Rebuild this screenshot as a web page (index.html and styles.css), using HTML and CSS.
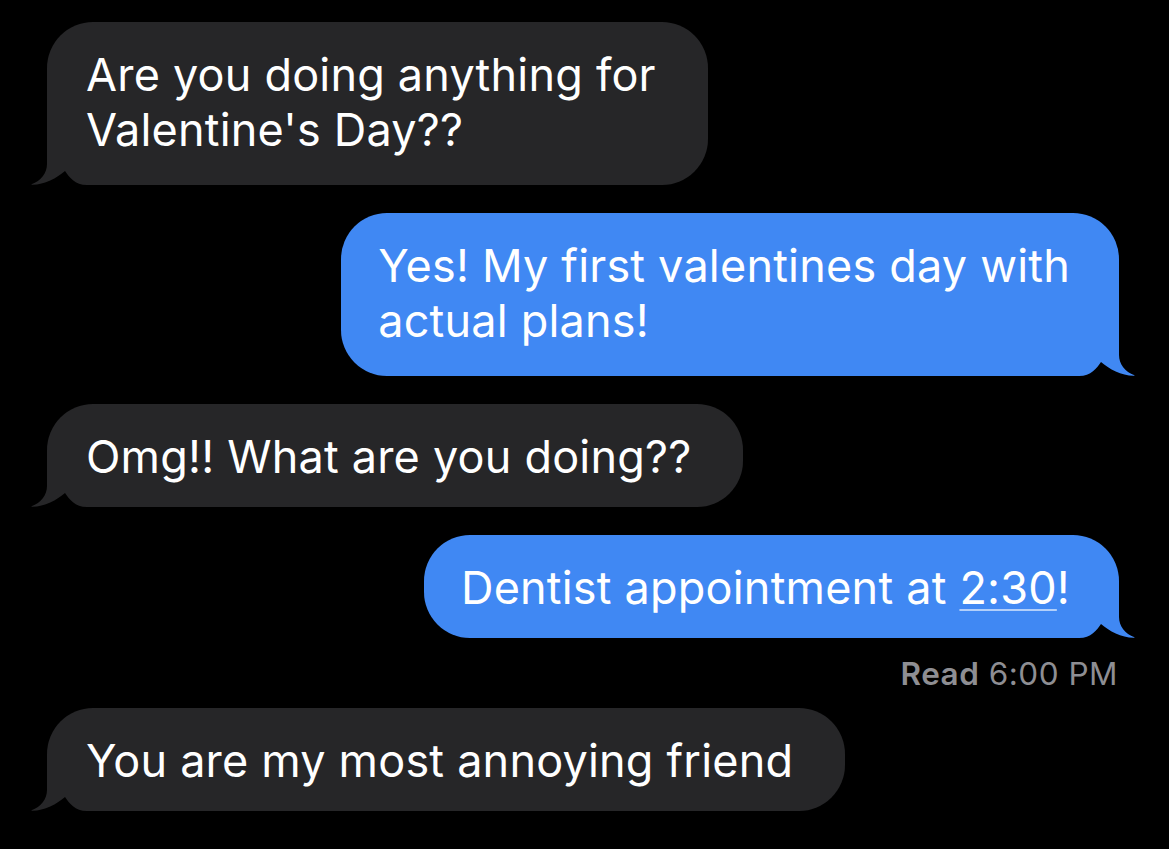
FILE: index.html
```html
<!DOCTYPE html>
<html lang="en">
<head>
<meta charset="utf-8">
<title>Messages</title>
<link rel="stylesheet" href="styles.css">
</head>
<body>
<main class="thread">
  <div class="msg them multi">
    <span class="txt">Are you doing anything for<br>Valentine's Day??</span>
    <svg class="tail" viewBox="0 0 56 30" aria-hidden="true"><rect x="16" y="0" width="40" height="30" fill="#000"/><path d="M16,0 L16,9 C16,18 10,26 0.5,29.2 Q0,29.6 1,29.8 C13,30 26,23 34,16 C38,22 44,30 56,30 L56,0 Z"/></svg>
  </div>
  <div class="msg me multi">
    <span class="txt">Yes! My first valentines day with<br>actual plans!</span>
    <svg class="tail" viewBox="0 0 56 30" aria-hidden="true"><rect x="16" y="0" width="40" height="30" fill="#000"/><path d="M16,0 L16,9 C16,18 10,26 0.5,29.2 Q0,29.6 1,29.8 C13,30 26,23 34,16 C38,22 44,30 56,30 L56,0 Z"/></svg>
  </div>
  <div class="msg them">
    <span class="txt">Omg!! What are you doing??</span>
    <svg class="tail" viewBox="0 0 56 30" aria-hidden="true"><rect x="16" y="0" width="40" height="30" fill="#000"/><path d="M16,0 L16,9 C16,18 10,26 0.5,29.2 Q0,29.6 1,29.8 C13,30 26,23 34,16 C38,22 44,30 56,30 L56,0 Z"/></svg>
  </div>
  <div class="msg me">
    <span class="txt">Dentist appointment at <span class="link">2:30</span>!</span>
    <svg class="tail" viewBox="0 0 56 30" aria-hidden="true"><rect x="16" y="0" width="40" height="30" fill="#000"/><path d="M16,0 L16,9 C16,18 10,26 0.5,29.2 Q0,29.6 1,29.8 C13,30 26,23 34,16 C38,22 44,30 56,30 L56,0 Z"/></svg>
  </div>
  <div class="receipt"><b>Read</b> 6:00 PM</div>
  <div class="msg them">
    <span class="txt">You are my most annoying friend</span>
    <svg class="tail" viewBox="0 0 56 30" aria-hidden="true"><rect x="16" y="0" width="40" height="30" fill="#000"/><path d="M16,0 L16,9 C16,18 10,26 0.5,29.2 Q0,29.6 1,29.8 C13,30 26,23 34,16 C38,22 44,30 56,30 L56,0 Z"/></svg>
  </div>
</main>
</body>
</html>
```

FILE: styles.css
```css
html, body {
  margin: 0;
  padding: 0;
  background: #000;
}

body {
  width: 1169px;
  height: 849px;
  overflow: hidden;
  font-family: Inter, "Noto Sans", sans-serif;
}

.thread {
  display: flex;
  flex-direction: column;
  padding: 22px 50px 0 47px;
}

.msg {
  position: relative;
  font-size: 45px;
  line-height: 55px;
  letter-spacing: 0.2px;
  color: #fff;
  border-radius: 46px;
  white-space: nowrap;
}

.msg + .msg {
  margin-top: 28px;
}

.txt {
  position: relative;
  z-index: 1;
}

.them {
  align-self: flex-start;
  background: #262628;
  padding: 25px 52px 23px 39px;
  border-bottom-left-radius: 0;
}

.me {
  align-self: flex-end;
  background: #4088f3;
  padding: 25px 49px 23px 37px;
  border-bottom-right-radius: 0;
}

.msg.multi {
  padding-bottom: 28px;
}

.tail {
  position: absolute;
  bottom: 0;
  width: 56px;
  height: 30px;
  display: block;
}

.tail path {
  fill: currentColor;
}

.them .tail {
  left: -16px;
  color: #262628;
}

.me .tail {
  right: -16px;
  color: #4088f3;
  transform: scaleX(-1);
}

.link {
  text-decoration: underline;
  text-decoration-color: rgba(255, 255, 255, 0.6);
  text-decoration-thickness: 2px;
  text-underline-offset: 5px;
}

.receipt {
  align-self: flex-end;
  margin: 18px 1px 16px 0;
  font-size: 31.5px;
  line-height: 36px;
  letter-spacing: 0.5px;
  color: #8e8e93;
}

.receipt b {
  font-weight: 600;
}
```
